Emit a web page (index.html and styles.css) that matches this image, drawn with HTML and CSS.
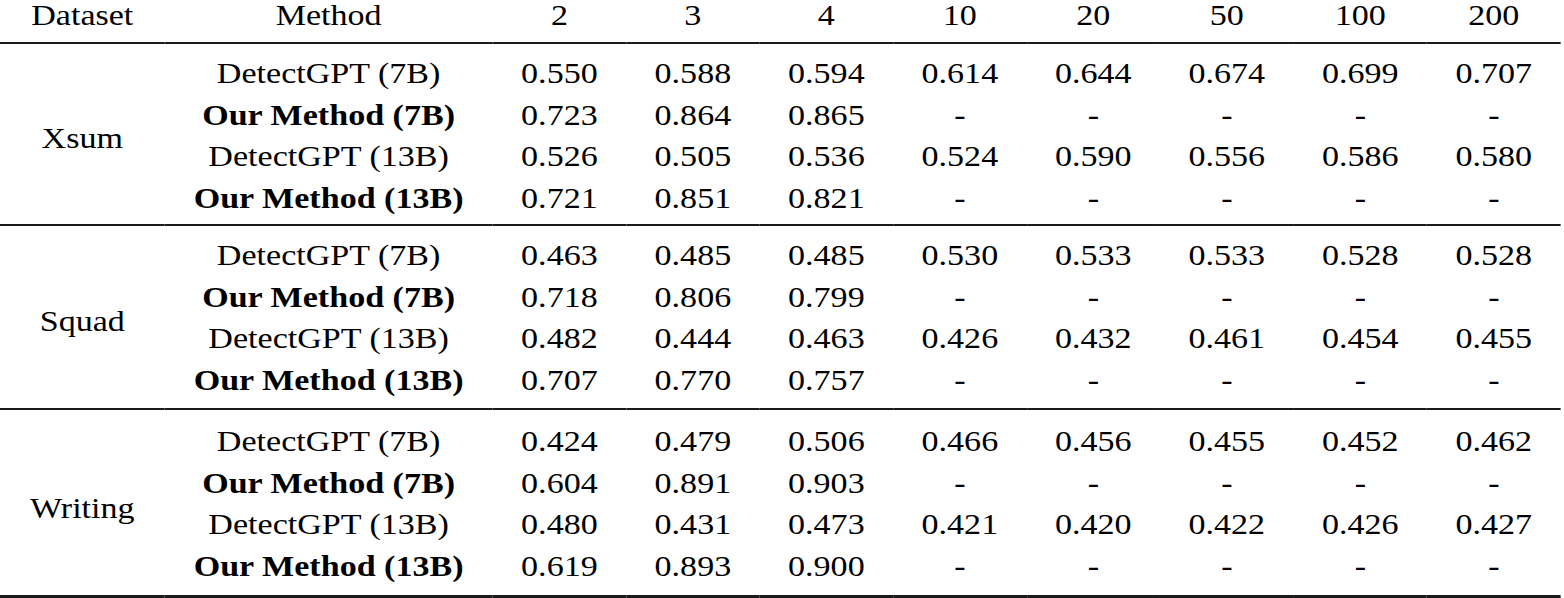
FILE: index.html
```html
<!DOCTYPE html>
<html>
<head>
<meta charset="utf-8">
<title>Results</title>
<link rel="stylesheet" href="styles.css">
</head>
<body>
	<div class="sheet">
		<table class="results">
			<colgroup>
				<col class="col-data">
				<col class="col-method">
				<col class="col-k"><col class="col-k"><col class="col-k"><col class="col-k">
				<col class="col-k"><col class="col-k"><col class="col-k"><col class="col-k">
			</colgroup>
			<thead>
				<tr>
					<th>Dataset</th><th>Method</th>
					<th>2</th><th>3</th><th>4</th><th>10</th><th>20</th><th>50</th><th>100</th><th>200</th>
				</tr>
			</thead>
			<tbody>
				<tr>
					<td rowspan="4" class="dataset">Xsum</td>
					<td>DetectGPT (7B)</td>
					<td>0.550</td><td>0.588</td><td>0.594</td><td>0.614</td><td>0.644</td><td>0.674</td><td>0.699</td><td>0.707</td>
				</tr>
				<tr>
					<td class="ours">Our Method (7B)</td>
					<td>0.723</td><td>0.864</td><td>0.865</td><td>-</td><td>-</td><td>-</td><td>-</td><td>-</td>
				</tr>
				<tr>
					<td>DetectGPT (13B)</td>
					<td>0.526</td><td>0.505</td><td>0.536</td><td>0.524</td><td>0.590</td><td>0.556</td><td>0.586</td><td>0.580</td>
				</tr>
				<tr>
					<td class="ours">Our Method (13B)</td>
					<td>0.721</td><td>0.851</td><td>0.821</td><td>-</td><td>-</td><td>-</td><td>-</td><td>-</td>
				</tr>
			</tbody>
			<tbody class="mid">
				<tr>
					<td rowspan="4" class="dataset">Squad</td>
					<td>DetectGPT (7B)</td>
					<td>0.463</td><td>0.485</td><td>0.485</td><td>0.530</td><td>0.533</td><td>0.533</td><td>0.528</td><td>0.528</td>
				</tr>
				<tr>
					<td class="ours">Our Method (7B)</td>
					<td>0.718</td><td>0.806</td><td>0.799</td><td>-</td><td>-</td><td>-</td><td>-</td><td>-</td>
				</tr>
				<tr>
					<td>DetectGPT (13B)</td>
					<td>0.482</td><td>0.444</td><td>0.463</td><td>0.426</td><td>0.432</td><td>0.461</td><td>0.454</td><td>0.455</td>
				</tr>
				<tr>
					<td class="ours">Our Method (13B)</td>
					<td>0.707</td><td>0.770</td><td>0.757</td><td>-</td><td>-</td><td>-</td><td>-</td><td>-</td>
				</tr>
			</tbody>
			<tbody class="last">
				<tr>
					<td rowspan="4" class="dataset">Writing</td>
					<td>DetectGPT (7B)</td>
					<td>0.424</td><td>0.479</td><td>0.506</td><td>0.466</td><td>0.456</td><td>0.455</td><td>0.452</td><td>0.462</td>
				</tr>
				<tr>
					<td class="ours">Our Method (7B)</td>
					<td>0.604</td><td>0.891</td><td>0.903</td><td>-</td><td>-</td><td>-</td><td>-</td><td>-</td>
				</tr>
				<tr>
					<td>DetectGPT (13B)</td>
					<td>0.480</td><td>0.431</td><td>0.473</td><td>0.421</td><td>0.420</td><td>0.422</td><td>0.426</td><td>0.427</td>
				</tr>
				<tr>
					<td class="ours">Our Method (13B)</td>
					<td>0.619</td><td>0.893</td><td>0.900</td><td>-</td><td>-</td><td>-</td><td>-</td><td>-</td>
				</tr>
			</tbody>
		</table>
	</div>
</body>
</html>
```

FILE: styles.css
```css
body {
	margin: 0;
	background: #fff;
}

/* the source table is stretched wider than the glyphs are tall */
.sheet {
	width: 1375px;
	transform: scaleX(1.135);
	transform-origin: 0 0;
}

.results {
	width: 1375px;
	table-layout: fixed;
	border-collapse: collapse;
	font-family: "Liberation Serif", "Times New Roman", serif;
	font-size: 30px;
	color: #000;
}

.col-data {
	width: 145px;
}

.col-method {
	width: 289px;
}

.col-k {
	width: 117.6px;
}

.results th,
.results td {
	padding: 0;
	text-align: center;
	font-weight: normal;
	line-height: 41.5px;
	white-space: nowrap;
}

.results thead th {
	height: 42px;
	line-height: 30px;
	vertical-align: top;
}

.results tbody {
	border-top: 2px solid #1a1a1a;
}

.results tbody.last {
	border-bottom: 3px solid #1a1a1a;
}

.results tbody tr:first-child td {
	padding-top: 8px;
}

.results tbody tr:last-child td {
	padding-bottom: 6px;
}

.results tbody.mid tr:last-child td {
	padding-bottom: 8px;
}

.results tbody.last tr:first-child td {
	padding-top: 10px;
}

.results tbody.last tr:last-child td {
	padding-bottom: 9px;
}

.results tbody td.dataset {
	padding-top: 4px;
	padding-bottom: 0;
	vertical-align: middle;
}

.results td.ours {
	font-weight: bold;
}
```
